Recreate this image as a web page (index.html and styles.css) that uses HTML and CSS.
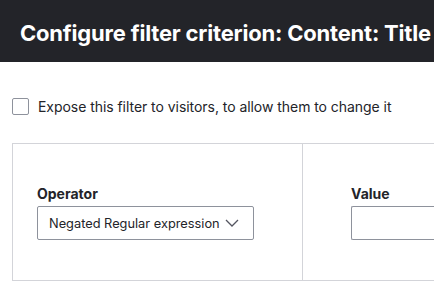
FILE: index.html
```html
<!DOCTYPE html>
<html>
<head>
<meta charset="utf-8">
<link rel="stylesheet" href="styles.css">
</head>
<body>
<div class="header"><h1 class="title">Configure filter criterion: Content: Title</h1></div>
<div class="content">
  <label class="check-row"><span class="checkbox"></span><span class="check-label">Expose this filter to visitors, to allow them to change it</span></label>
  <div class="fieldset">
    <div class="col col-op">
      <div class="label">Operator</div>
      <div class="select">
        <span>Negated Regular expression</span>
        <svg class="chev" width="14" height="8" viewBox="0 0 14 8"><path d="M1 1l6 6 6-6" fill="none" stroke="#545560" stroke-width="1.3"/></svg>
      </div>
    </div>
    <div class="col col-val">
      <div class="label">Value</div>
      <div class="input"></div>
    </div>
  </div>
</div>
</body>
</html>
```
FILE: styles.css
```css
html, body { margin: 0; padding: 0; }
body {
  width: 434px;
  height: 289px;
  overflow: hidden;
  background: #fff;
  font-family: Inter, "Noto Sans", sans-serif;
  color: #232429;
}
.header {
  background: #232429;
  height: 62px;
  display: flex;
  align-items: center;
  padding-left: 20px;
  white-space: nowrap;
  overflow: hidden;
}
.title {
  margin: 0;
  color: #fff;
  font-size: 22px;
  font-weight: 700;
  letter-spacing: -0.2px;
  line-height: 1;
  padding-top: 3px;
}
.content {
  padding: 36px 0 0 12px;
}
.check-row {
  display: flex;
  align-items: center;
  gap: 9px;
  height: 17px;
}
.checkbox {
  width: 15px;
  height: 15px;
  border: 1px solid #8e929c;
  border-radius: 2px;
  flex: none;
}
.check-label {
  font-size: 14px;
  letter-spacing: -0.05px;
  white-space: nowrap;
}
.fieldset {
  margin-top: 28px;
  height: 136px;
  border: 1px solid #d3d4d9;
  border-right: none;
  display: flex;
}
.col {
  padding-top: 41px;
}
.col-op {
  width: 265px;
  flex: none;
  padding-left: 24px;
  border-right: 1px solid #d3d4d9;
}
.col-val {
  flex: 1;
  padding-left: 48px;
}
.label {
  font-size: 14px;
  font-weight: 700;
  line-height: 18px;
  margin-bottom: 3px;
}
.select {
  border: 1px solid #8e929c;
  border-radius: 2px;
  display: flex;
  align-items: center;
  justify-content: space-between;
  padding: 0 14px 0 11px;
  box-sizing: border-box;
  width: 217px;
  height: 34px;
  font-size: 12.8px;
  white-space: nowrap;
}
.chev { flex: none; }
.input {
  height: 34px;
  box-sizing: border-box;
  border: 1px solid #8e929c;
  border-right: none;
  border-radius: 2px 0 0 2px;
}
```
